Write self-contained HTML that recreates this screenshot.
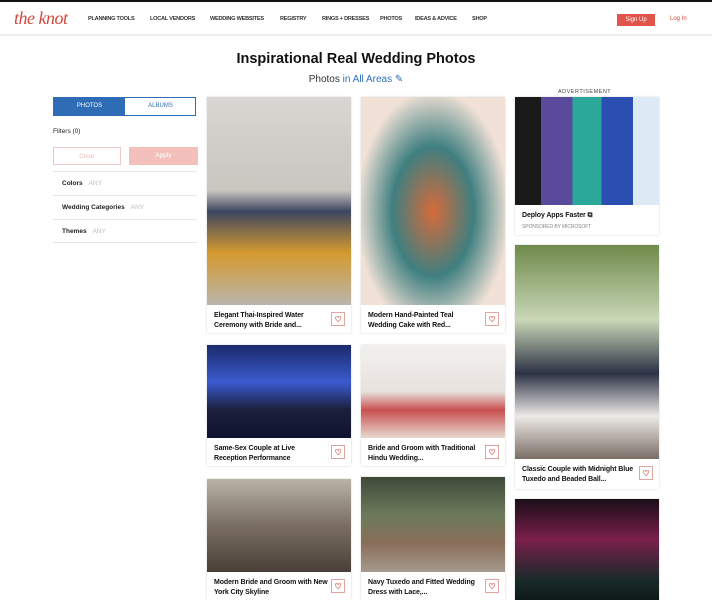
<!DOCTYPE html>
<html><head><meta charset="utf-8"><style>
*{box-sizing:border-box;margin:0;padding:0}
body{width:712px;height:600px;overflow:hidden;background:#fff;font-family:"Liberation Sans",sans-serif;color:#222;position:relative}
.top{position:absolute;left:0;top:0;width:712px;height:2px;background:#111}
.hdr{position:absolute;top:2px;left:0;width:712px;height:34px;border-bottom:2px solid #eee}
.logo{position:absolute;left:14px;top:6px;font-family:"Liberation Serif",serif;font-style:italic;color:#d2473b;font-size:18px;letter-spacing:-0.5px}
.nav{position:absolute;top:14px;font-size:5.6px;font-weight:bold;color:#333;letter-spacing:-0.25px;white-space:nowrap}
.sign{position:absolute;left:617px;top:12px;width:38px;height:12px;background:#e0544a;color:#fff;font-size:6px;text-align:center;line-height:12px}
.log{position:absolute;left:670px;top:14px;font-size:6px;color:#d2473b}
h1{position:absolute;top:51px;left:0;width:712px;text-align:center;font-size:14.5px;font-weight:bold;color:#111}
.sub{position:absolute;top:74px;left:0;width:712px;text-align:center;font-size:10px;color:#333}
.sub span{color:#2f6fb8}
.tabs{position:absolute;left:53px;top:97px;width:143px;height:19px;border:1px solid #2e6db5}
.tabs div{position:absolute;top:0;height:17px;width:71px;font-size:6px;text-align:center;line-height:17px}
.f{position:absolute;font-size:6.5px}
.btn{position:absolute;top:147px;height:18px;font-size:6.5px;text-align:center;line-height:18px}
.row{position:absolute;left:53px;width:144px;height:24px;border-top:1px solid #e6e6e6;font-size:6.5px;font-weight:bold;padding-left:9px;line-height:24px}
.row span{color:#bbb;font-weight:normal;margin-left:6px}
.card{position:absolute;width:144px;box-shadow:0 0 2px rgba(0,0,0,.18);background:#fff}
.im{width:144px}
.cap{font-size:7px;font-weight:bold;line-height:9.5px;padding:6px 22px 0 7px;color:#111;height:28px;position:relative;letter-spacing:-0.1px}
.h{position:absolute;right:6px;top:7px;width:14px;height:14px;border:1px solid #e0a49e;color:#d2473b;font-size:8px;text-align:center;line-height:13px}
</style></head><body>
<div class="top"></div>
<div class="hdr">
<div class="logo">the knot</div>
<div class="nav" style="left:88px">PLANNING TOOLS</div>
<div class="nav" style="left:150px">LOCAL VENDORS</div>
<div class="nav" style="left:210px">WEDDING WEBSITES</div>
<div class="nav" style="left:280px">REGISTRY</div>
<div class="nav" style="left:322px">RINGS + DRESSES</div>
<div class="nav" style="left:380px">PHOTOS</div>
<div class="nav" style="left:415px">IDEAS &amp; ADVICE</div>
<div class="nav" style="left:472px">SHOP</div>
<div class="sign">Sign Up</div>
<div class="log">Log In</div>
</div>
<h1>Inspirational Real Wedding Photos</h1>
<div class="sub">Photos <span>in All Areas ✎</span></div>
<div class="f" style="left:558px;top:89px;font-size:5.5px;letter-spacing:.5px;color:#444">ADVERTISEMENT</div>
<div class="tabs"><div style="left:0;background:#2e6db5;color:#fff">PHOTOS</div><div style="left:71px;color:#2e6db5">ALBUMS</div></div>
<div class="f" style="left:53px;top:128px">Filters (0)</div>
<div class="btn" style="left:53px;width:68px;border:1px solid #f0c8c4;color:#f0bdb8">Clear</div>
<div class="btn" style="left:129px;width:69px;background:#f3c0bb;color:#fff">Apply</div>
<div class="row" style="top:171px">Colors<span>ANY</span></div>
<div class="row" style="top:195px">Wedding Categories<span>ANY</span></div>
<div class="row" style="top:219px;border-bottom:1px solid #e6e6e6">Themes<span>ANY</span></div>

<div class="card" style="left:207px;top:97px"><div class="im" style="height:208px;background:linear-gradient(180deg,#d8d6d2 0%,#c9c5bf 45%,#3c4660 55%,#d59a2e 75%,#b9b5ae 100%)"></div><div class="cap">Elegant Thai-Inspired Water Ceremony with Bride and...<div class="h">♡</div></div></div>
<div class="card" style="left:207px;top:345px"><div class="im" style="height:93px;background:linear-gradient(180deg,#1c2a6a,#3a5bd0 40%,#1a1f3a 70%,#0e1330)"></div><div class="cap">Same-Sex Couple at Live Reception Performance<div class="h">♡</div></div></div>
<div class="card" style="left:207px;top:479px"><div class="im" style="height:93px;background:linear-gradient(180deg,#b9b3a8,#7a6e62 50%,#4a3f38)"></div><div class="cap">Modern Bride and Groom with New York City Skyline<div class="h">♡</div></div></div>

<div class="card" style="left:361px;top:97px"><div class="im" style="height:208px;background:radial-gradient(ellipse at 50% 55%,#d66a3a 0%,#3f7f80 40%,#f1e1d6 75%)"></div><div class="cap">Modern Hand-Painted Teal Wedding Cake with Red...<div class="h">♡</div></div></div>
<div class="card" style="left:361px;top:345px"><div class="im" style="height:93px;background:linear-gradient(180deg,#f2f0ee,#e8e2de 50%,#c85050 70%,#e7d9cf)"></div><div class="cap">Bride and Groom with Traditional Hindu Wedding...<div class="h">♡</div></div></div>
<div class="card" style="left:361px;top:477px"><div class="im" style="height:95px;background:linear-gradient(180deg,#3d4a3a,#6b7a5a 40%,#8a6e5a 70%,#a59a8e)"></div><div class="cap">Navy Tuxedo and Fitted Wedding Dress with Lace,...<div class="h">♡</div></div></div>

<div class="card" style="left:515px;top:97px"><div class="im" style="height:108px;background:linear-gradient(90deg,#1a1a1a 0 18%,#5a4a9c 18% 40%,#2aa89a 40% 60%,#2a4fb0 60% 82%,#dde9f5 82%)"></div><div class="cap" style="height:30px">Deploy Apps Faster ⧉<div style="font-size:5px;color:#888;font-weight:normal;margin-top:2px">SPONSORED BY MICROSOFT</div></div></div>
<div class="card" style="left:515px;top:245px"><div class="im" style="height:214px;background:linear-gradient(180deg,#6f8a4a,#c9d7b7 35%,#2c3245 60%,#ece9e6 80%,#7a6e66)"></div><div class="cap" style="height:30px">Classic Couple with Midnight Blue Tuxedo and Beaded Ball...<div class="h">♡</div></div></div>
<div class="card" style="left:515px;top:499px"><div class="im" style="height:101px;background:linear-gradient(180deg,#1a0e18,#7a1f4a 40%,#1a2a2a 80%,#0e1a18)"></div></div>
</body></html>
